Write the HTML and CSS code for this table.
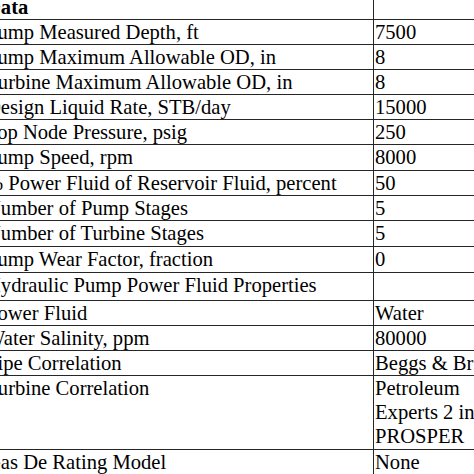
FILE: index.html
```html
<!DOCTYPE html>
<html>
<head>
<meta charset="utf-8">
<link rel="stylesheet" href="styles.css">
</head>
<body>
<div class="frame">
<table class="data">
  <colgroup><col class="c-name"><col class="c-val"></colgroup>
  <tr class="head"><td>Data</td><td></td></tr>
  <tr><td>Pump Measured Depth, ft</td><td>7500</td></tr>
  <tr><td>Pump Maximum Allowable OD, in</td><td>8</td></tr>
  <tr><td>Turbine Maximum Allowable OD, in</td><td>8</td></tr>
  <tr><td>Design Liquid Rate, STB/day</td><td>15000</td></tr>
  <tr><td>Top Node Pressure, psig</td><td>250</td></tr>
  <tr class="r26"><td>Pump Speed, rpm</td><td>8000</td></tr>
  <tr><td>% Power Fluid of Reservoir Fluid, percent</td><td>50</td></tr>
  <tr><td>Number of Pump Stages</td><td>5</td></tr>
  <tr class="r26"><td>Number of Turbine Stages</td><td>5</td></tr>
  <tr class="r26"><td>Pump Wear Factor, fraction</td><td>0</td></tr>
  <tr class="r28"><td>Hydraulic Pump Power Fluid Properties</td><td></td></tr>
  <tr><td>Power Fluid</td><td>Water</td></tr>
  <tr><td>Water Salinity, ppm</td><td>80000</td></tr>
  <tr><td>Pipe Correlation</td><td>Beggs &amp; Brill</td></tr>
  <tr class="tall"><td>Turbine Correlation</td><td>Petroleum Experts 2 in PROSPER</td></tr>
  <tr><td>Gas De Rating Model</td><td>None</td></tr>
</table>
</div>
</body>
</html>
```
FILE: styles.css
```css
html, body {
  margin: 0;
  padding: 0;
  background: #fff;
}
.frame {
  width: 474px;
  height: 474px;
  overflow: hidden;
  position: relative;
}
.data {
  border-collapse: collapse;
  table-layout: fixed;
  width: 534px;
  margin-left: -16px;
  margin-top: -6px;
  font-family: "Liberation Serif", "Times New Roman", serif;
  font-size: 20.6px;
  color: #000;
}
.c-name { width: 389px; }
.c-val { width: 145px; }
.data td {
  border: 1px solid #262626;
  padding: 0 0 0 1px;
  line-height: 24px;
  height: 24px;
  vertical-align: top;
  white-space: normal;
}
.data td:first-child {
  white-space: nowrap;
  overflow: hidden;
}
.head td:first-child { font-weight: bold; }
.r26 td { height: 25px; }
.r28 td { height: 27px; }
.tall td { height: 73px; }
```
